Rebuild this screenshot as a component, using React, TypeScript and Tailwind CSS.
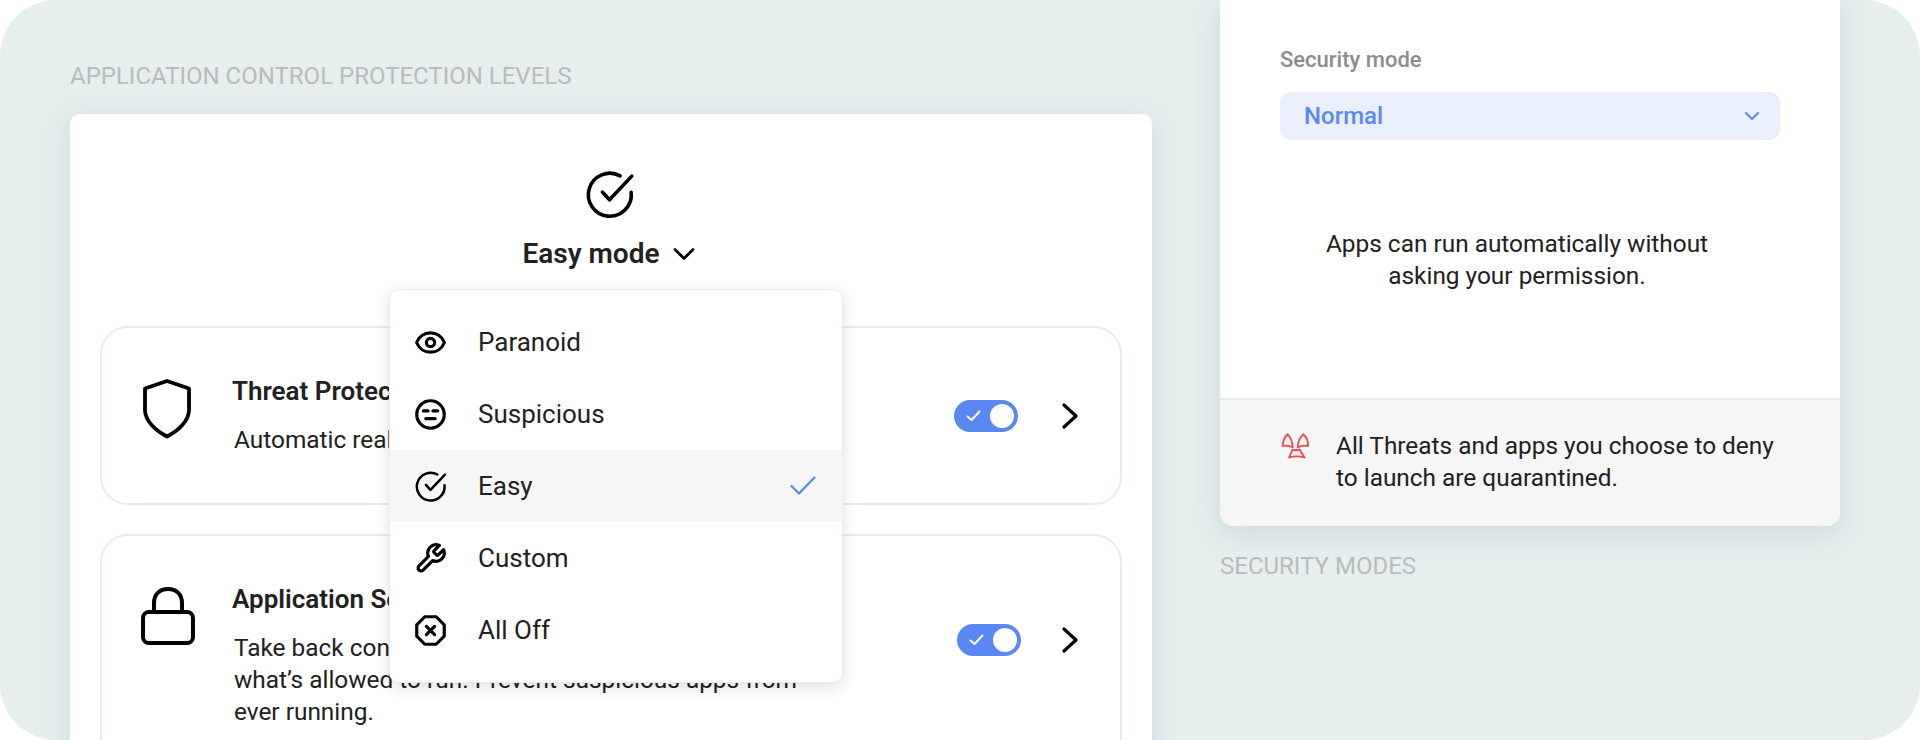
import React from "react";

const Stroke = ({ size, view = 24, sw = 2, className = "", children }: any) => (
  <svg width={size} height={size} viewBox={`0 0 ${view} ${view}`} fill="none" stroke="currentColor" strokeWidth={sw} strokeLinecap="round" strokeLinejoin="round" className={className}>
    {children}
  </svg>
);

const CheckCircle = ({ size, sw }: { size: number; sw: number }) => (
  <Stroke size={size} view={48} sw={sw}>
    <path d="M34 6.500A20.200 20.200 0 1 0 44.400 22" />
    <path d="M17.300 21.700L24 29L45 6.700" />
  </Stroke>
);

const Eye = () => (
  <Stroke size={33} sw={2.3}>
    <path d="M2.060 12.350a1 1 0 0 1 0-.7 10.750 10.750 0 0 1 19.880 0 1 1 0 0 1 0 .7 10.750 10.750 0 0 1-19.880 0" />
    <circle cx="12" cy="12" r="3" />
  </Stroke>
);

const Face = () => (
  <Stroke size={33} sw={2.3}>
    <circle cx="12" cy="12" r="10" />
    <path d="M6.800 9.400h3.400M13.800 9.400h3.400M8.600 15h6.800" />
  </Stroke>
);

const Wrench = () => (
  <Stroke size={33} sw={2.3}>
    <path d="M14.700 6.300a1 1 0 0 0 0 1.400l1.600 1.600a1 1 0 0 0 1.400 0l3.770-3.770a6 6 0 0 1-7.940 7.940l-6.910 6.910a2.120 2.120 0 0 1-3-3l6.910-6.910a6 6 0 0 1 7.940-7.940l-3.760 3.760z" />
  </Stroke>
);

const OctagonX = () => (
  <Stroke size={33} sw={2.3}>
    <path d="M7.860 2h8.280L22 7.860v8.280L16.140 22H7.860L2 16.140V7.860z" />
    <path d="M15 9l-6 6M9 9l6 6" />
  </Stroke>
);

const Radiation = () => (
  <svg width="29" height="28" viewBox="0 0 29 28" fill="none" stroke="#f4444c" strokeWidth="1.800" strokeLinejoin="round">
    <path d="M6.700 2.300C8.500 4 11.500 9 11.700 15.200C8.500 13.500 5 13.200 1.700 14C1.500 9.500 4 4.500 6.700 2.300Z" />
    <path d="M22.300 2.300C20 4.500 16.800 9 16.700 15.200C20 13.500 23.500 13.200 27 14C27.200 9.500 25 4.500 22.300 2.300Z" />
    <path d="M11.500 17.500C13 18.500 17 18.500 18.500 17.500L23.500 25.500C19 24.200 12.500 24.200 8.200 25.500Z" />
  </svg>
);

const Toggle = () => (
  <div className="flex h-8 w-16 shrink-0 items-center justify-between rounded-full bg-[#5b87f2] pl-[12px] pr-[4px]">
    <svg width="15" height="12" viewBox="0 0 15 12" fill="none" stroke="#ffffff" strokeWidth="2" strokeLinecap="round" strokeLinejoin="round">
      <path d="M1.500 6.500L5.500 10L13.500 1.500" />
    </svg>
    <div className="h-[24px] w-[24px] rounded-full bg-white" />
  </div>
);

const Chevron = () => (
  <svg width="16" height="26" viewBox="0 0 16 26" fill="none" stroke="#000000" strokeWidth="3.200" strokeLinecap="round" strokeLinejoin="round" className="shrink-0">
    <path d="M2 2L14 13L2 24" />
  </svg>
);

const Shield = () => (
  <svg width="50" height="60" viewBox="0 0 50 60" fill="none" stroke="#000000" strokeWidth="3.800" strokeLinejoin="round">
    <path d="M25 2L47 9.500V31C47 42 36 52 25 57.500C14 52 3 42 3 31V9.500Z" />
  </svg>
);

const Lock = () => (
  <svg width="54" height="58" viewBox="0 0 54 58" fill="none" stroke="#000000" strokeWidth="4" strokeLinejoin="round">
    <path d="M13 25V16C13 7 19 2 27 2C35 2 41 7 41 16V25" />
    <rect x="2" y="25" width="50" height="31" rx="6" />
  </svg>
);

const items = [
  { label: "Paranoid", icon: <Eye /> },
  { label: "Suspicious", icon: <Face /> },
  { label: "Easy", icon: <CheckCircle size={33} sw={3.600} />, active: true },
  { label: "Custom", icon: <Wrench /> },
  { label: "All Off", icon: <OctagonX /> },
];

export default function App() {
  return (
    <div className="h-[740px] w-[1920px] overflow-hidden bg-white font-['Roboto',sans-serif] text-[#212121]">
      <div className="flex h-[740px] overflow-hidden rounded-[56px] bg-[#e6efee]">
        <div className="ml-[70px] w-[1082px] shrink-0 pt-[62px]">
          <div className="mb-[24px] text-[24px] leading-[28px] text-[#b6bdbc]">APPLICATION CONTROL PROTECTION LEVELS</div>
          <div className="relative h-[640px] rounded-t-[10px] bg-white px-[30px] pt-[55px] shadow-[0_8px_28px_rgba(60,90,100,0.14)]">
            <div className="flex flex-col items-center">
              <div className="pr-[3px] text-black"><CheckCircle size={51} sw={3.400} /></div>
              <div className="mt-[16px] flex h-[36px] items-center gap-[13px] pr-[5px] text-[28px] font-semibold">
                <span>Easy mode</span>
                <svg width="22" height="14" viewBox="0 0 22 14" fill="none" stroke="#000000" strokeWidth="2.800" strokeLinecap="round" strokeLinejoin="round">
                  <path d="M2 2.500L11 11.500L20 2.500" />
                </svg>
              </div>
            </div>

            <div className="mt-[54px] flex h-[179px] items-center rounded-[28px] border-2 border-[#e2eafc] pr-[42px] pl-[40px]">
              <div className="flex flex-1 items-start">
                <div className="w-[90px] shrink-0 pt-[4px]"><Shield /></div>
                <div>
                  <div className="text-[26px] leading-[32px] font-semibold">Threat Protection</div>
                  <div className="mt-[17px] pl-[2px] text-[24.400px] leading-[32px]">Automatic real-time malware protection.</div>
                </div>
              </div>
              <div className="mr-[44px]"><Toggle /></div>
              <Chevron />
            </div>

            <div className="mt-[29px] h-[300px] rounded-t-[28px] border-2 border-[#e2eafc] pr-[42px] pl-[39px]">
              <div className="flex items-start pt-[47px]">
                <div className="w-[91px] shrink-0 pt-[4px]"><Lock /></div>
                <div className="w-[620px] shrink-0">
                  <div className="text-[26px] leading-[32px] font-semibold">Application Security</div>
                  <div className="mt-[17px] pl-[2px] text-[24.400px] leading-[32px]">
                    Take back control of your device by deciding<br />
                    what’s allowed to run. Prevent suspicious apps from<br />
                    ever running.
                  </div>
                </div>
                <div className="ml-auto flex items-center gap-[41px] pt-[41px]">
                  <Toggle />
                  <Chevron />
                </div>
              </div>
            </div>

            <div className="absolute top-[175px] left-[319px] w-[454px] rounded-[10px] border border-[#e9ecee] bg-white py-[16px] shadow-[0_4px_16px_rgba(0,0,0,0.13)]">
              {items.map((it) => (
                <div key={it.label} className={`flex h-[72px] items-center pr-[26px] pl-[24px] ${it.active ? "bg-[#f6f6f6]" : ""}`}>
                  <div className="w-[64px] shrink-0 text-black">{it.icon}</div>
                  <span className="flex-1 text-[26px] leading-[30px]">{it.label}</span>
                  {it.active && (
                    <svg width="26" height="20" viewBox="0 0 26 20" fill="none" stroke="#5b87f2" strokeWidth="2.200" strokeLinecap="round" strokeLinejoin="round">
                      <path d="M1.500 10L9 17.500L24.500 1.500" />
                    </svg>
                  )}
                </div>
              ))}
            </div>
          </div>
        </div>

        <div className="ml-[68px] w-[620px] shrink-0">
          <div className="overflow-hidden rounded-b-[14px] bg-white shadow-[0_8px_28px_rgba(60,90,100,0.14)]">
            <div className="h-[398px] px-[60px] pt-[46px]">
              <div className="text-[22px] leading-[28px] font-medium text-[#8b8b8b]">Security mode</div>
              <div className="mt-[18px] flex h-[48px] items-center justify-between rounded-[11px] bg-[#e9effb] pr-[20px] pl-[24px]">
                <span className="text-[24px] font-medium text-[#5b87f2]">Normal</span>
                <svg width="16" height="10" viewBox="0 0 16 10" fill="none" stroke="#5b87f2" strokeWidth="2" strokeLinecap="round" strokeLinejoin="round">
                  <path d="M2 2L8 8L14 2" />
                </svg>
              </div>
              <div className="mt-[88px] mr-[26px] text-center text-[24.400px] leading-[32px]">
                Apps can run automatically without<br />asking your permission.
              </div>
            </div>
            <div className="flex h-[128px] items-start border-t-2 border-[#e8ebec] bg-[#f6f6f6] pt-[30px] pl-[61px]">
              <div className="w-[55px] shrink-0 pt-[2px]"><Radiation /></div>
              <div className="text-[24.400px] leading-[32px]">
                All Threats and apps you choose to deny<br />to launch are quarantined.
              </div>
            </div>
          </div>
          <div className="mt-[26px] text-[24px] leading-[28px] text-[#b6bdbc]">SECURITY MODES</div>
        </div>
      </div>
    </div>
  );
}
